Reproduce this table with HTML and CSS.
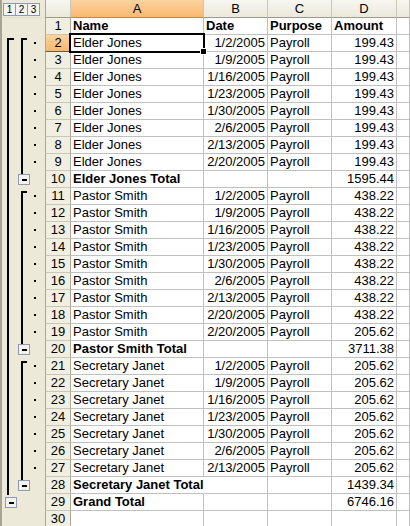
FILE: index.html
```html
<!DOCTYPE html>
<html>
<head>
<meta charset="utf-8">
<link rel="stylesheet" href="styles.css">
</head>
<body>
<div class="app">
  <div class="outline">
    <div class="levels"><span>1</span><span>2</span><span>3</span></div>
    <div class="br1"></div>
    <div class="btn lv1 r29"></div>
    <div class="br2 g1"></div>
    <div class="br2 g2"></div>
    <div class="br2 g3"></div>
    <div class="btn lv2 r10"></div>
    <div class="btn lv2 r20"></div>
    <div class="btn lv2 r28"></div>
    <div class="dots g1"></div>
    <div class="dots g2"></div>
    <div class="dots g3"></div>
  </div>
  <div class="sheet">
    <div class="ch corner"></div><div class="ch sel">A</div><div class="ch">B</div><div class="ch">C</div><div class="ch">D</div><div class="ch"></div>

    <div class="rh">1</div><div class="c b">Name</div><div class="c b">Date</div><div class="c b">Purpose</div><div class="c b">Amount</div><div class="c"></div>
    <div class="rh sel">2</div><div class="c active">Elder Jones</div><div class="c r">1/2/2005</div><div class="c">Payroll</div><div class="c r">199.43</div><div class="c"></div>
    <div class="rh">3</div><div class="c">Elder Jones</div><div class="c r">1/9/2005</div><div class="c">Payroll</div><div class="c r">199.43</div><div class="c"></div>
    <div class="rh">4</div><div class="c">Elder Jones</div><div class="c r">1/16/2005</div><div class="c">Payroll</div><div class="c r">199.43</div><div class="c"></div>
    <div class="rh">5</div><div class="c">Elder Jones</div><div class="c r">1/23/2005</div><div class="c">Payroll</div><div class="c r">199.43</div><div class="c"></div>
    <div class="rh">6</div><div class="c">Elder Jones</div><div class="c r">1/30/2005</div><div class="c">Payroll</div><div class="c r">199.43</div><div class="c"></div>
    <div class="rh">7</div><div class="c">Elder Jones</div><div class="c r">2/6/2005</div><div class="c">Payroll</div><div class="c r">199.43</div><div class="c"></div>
    <div class="rh">8</div><div class="c">Elder Jones</div><div class="c r">2/13/2005</div><div class="c">Payroll</div><div class="c r">199.43</div><div class="c"></div>
    <div class="rh">9</div><div class="c">Elder Jones</div><div class="c r">2/20/2005</div><div class="c">Payroll</div><div class="c r">199.43</div><div class="c"></div>
    <div class="rh">10</div><div class="c b">Elder Jones Total</div><div class="c"></div><div class="c"></div><div class="c r">1595.44</div><div class="c"></div>
    <div class="rh">11</div><div class="c">Pastor Smith</div><div class="c r">1/2/2005</div><div class="c">Payroll</div><div class="c r">438.22</div><div class="c"></div>
    <div class="rh">12</div><div class="c">Pastor Smith</div><div class="c r">1/9/2005</div><div class="c">Payroll</div><div class="c r">438.22</div><div class="c"></div>
    <div class="rh">13</div><div class="c">Pastor Smith</div><div class="c r">1/16/2005</div><div class="c">Payroll</div><div class="c r">438.22</div><div class="c"></div>
    <div class="rh">14</div><div class="c">Pastor Smith</div><div class="c r">1/23/2005</div><div class="c">Payroll</div><div class="c r">438.22</div><div class="c"></div>
    <div class="rh">15</div><div class="c">Pastor Smith</div><div class="c r">1/30/2005</div><div class="c">Payroll</div><div class="c r">438.22</div><div class="c"></div>
    <div class="rh">16</div><div class="c">Pastor Smith</div><div class="c r">2/6/2005</div><div class="c">Payroll</div><div class="c r">438.22</div><div class="c"></div>
    <div class="rh">17</div><div class="c">Pastor Smith</div><div class="c r">2/13/2005</div><div class="c">Payroll</div><div class="c r">438.22</div><div class="c"></div>
    <div class="rh">18</div><div class="c">Pastor Smith</div><div class="c r">2/20/2005</div><div class="c">Payroll</div><div class="c r">438.22</div><div class="c"></div>
    <div class="rh">19</div><div class="c">Pastor Smith</div><div class="c r">2/20/2005</div><div class="c">Payroll</div><div class="c r">205.62</div><div class="c"></div>
    <div class="rh">20</div><div class="c b">Pastor Smith Total</div><div class="c"></div><div class="c"></div><div class="c r">3711.38</div><div class="c"></div>
    <div class="rh">21</div><div class="c">Secretary Janet</div><div class="c r">1/2/2005</div><div class="c">Payroll</div><div class="c r">205.62</div><div class="c"></div>
    <div class="rh">22</div><div class="c">Secretary Janet</div><div class="c r">1/9/2005</div><div class="c">Payroll</div><div class="c r">205.62</div><div class="c"></div>
    <div class="rh">23</div><div class="c">Secretary Janet</div><div class="c r">1/16/2005</div><div class="c">Payroll</div><div class="c r">205.62</div><div class="c"></div>
    <div class="rh">24</div><div class="c">Secretary Janet</div><div class="c r">1/23/2005</div><div class="c">Payroll</div><div class="c r">205.62</div><div class="c"></div>
    <div class="rh">25</div><div class="c">Secretary Janet</div><div class="c r">1/30/2005</div><div class="c">Payroll</div><div class="c r">205.62</div><div class="c"></div>
    <div class="rh">26</div><div class="c">Secretary Janet</div><div class="c r">2/6/2005</div><div class="c">Payroll</div><div class="c r">205.62</div><div class="c"></div>
    <div class="rh">27</div><div class="c">Secretary Janet</div><div class="c r">2/13/2005</div><div class="c">Payroll</div><div class="c r">205.62</div><div class="c"></div>
    <div class="rh">28</div><div class="c b spill">Secretary Janet Total</div><div class="c"></div><div class="c"></div><div class="c r">1439.34</div><div class="c"></div>
    <div class="rh">29</div><div class="c b">Grand Total</div><div class="c"></div><div class="c"></div><div class="c r">6746.16</div><div class="c"></div>
    <div class="rh">30</div><div class="c"></div><div class="c"></div><div class="c"></div><div class="c"></div><div class="c"></div>
  </div>
</div>
</body>
</html>
```
FILE: styles.css
```css
html, body {
  margin: 0;
  padding: 0;
  background: #ffffff;
}
body {
  font-family: "Liberation Sans", Arial, sans-serif;
  font-size: 13px;
  color: #000;
}
.app {
  display: flex;
  width: 410px;
  height: 526px;
  overflow: hidden;
}

/* ---------- outline gutter ---------- */
.outline {
  flex: none;
  width: 45px;
  display: grid;
  grid-template-columns: 14px 14px 17px;
  grid-template-rows: 18px repeat(30, 17px);
  background: #ECE9D8;
  box-sizing: border-box;
  border-left: 2px solid #A7A395;
}
.levels {
  grid-column: 1 / 4;
  grid-row: 1;
  display: flex;
  padding: 3px 0 0 1px;
  border-bottom: 1px solid #E3E0D0;
}
.levels span {
  width: 11px;
  height: 11px;
  border: 1px solid #8C9AB7;
  margin-right: -1px;
  background: #F5F4EE;
  font-size: 10px;
  line-height: 11px;
  text-align: center;
}
.br1 {
  grid-column: 1;
  grid-row: 3 / 30;
  margin: 3px 0 -1px 5px;
  width: 7px;
  box-sizing: border-box;
  border-left: 2px solid #000;
  border-top: 2px solid #000;
}
.br2 {
  grid-column: 2;
  margin: 3px 0 -3px 5px;
  width: 6px;
  box-sizing: border-box;
  border-left: 2px solid #000;
  border-top: 2px solid #000;
}
.g1 { grid-row: 3 / 11; }
.g2 { grid-row: 12 / 21; }
.g3 { grid-row: 22 / 29; }
.dots {
  grid-column: 3;
  background-image: repeating-linear-gradient(to bottom, transparent 0 7px, #000 7px 9px, transparent 9px 17px);
  background-size: 2px 17px;
  background-repeat: repeat-y;
  background-position: 4px 0;
}
.btn {
  width: 12px;
  height: 11px;
  box-sizing: border-box;
  border: 1px solid #8C9AB7;
  background: #F3F2EC;
  align-self: center;
  position: relative;
}
.btn::after {
  content: "";
  position: absolute;
  left: 3px;
  top: 4px;
  width: 5px;
  height: 2px;
  background: #000;
}
.lv1 { grid-column: 1; margin-left: 3px; }
.lv2 { grid-column: 2; margin-left: 2px; }
.r10 { grid-row: 11; }
.r20 { grid-row: 21; }
.r28 { grid-row: 29; }
.r29 { grid-row: 30; }

/* ---------- sheet ---------- */
.sheet {
  flex: 1;
  display: grid;
  grid-template-columns: 26px 133px 64px 64px 65px 1fr;
  grid-template-rows: 18px repeat(30, 17px);
  line-height: 16px;
  white-space: nowrap;
}
.ch {
  background: linear-gradient(#F7F6F0, #EBE8DC);
  border-right: 1px solid #CBC7B8;
  border-bottom: 1px solid #9D9A8C;
  text-align: center;
  padding-top: 1px;
  line-height: 16px;
}
.ch.corner {
  border-left: 1px solid #ACA899;
}
.ch.sel {
  background: linear-gradient(#FBD3A0, #F8B870);
  border-bottom-color: #C5873C;
}
.rh {
  background: #F1EFE2;
  border-left: 1px solid #ACA899;
  border-right: 1px solid #ACA899;
  border-bottom: 1px solid #CBC7B8;
  text-align: center;
}
.rh.sel {
  background: linear-gradient(#FBD3A0, #F8B870);
  border-bottom-color: #6E5A3A;
}
.c {
  border-right: 1px solid #C0C0C0;
  border-bottom: 1px solid #C0C0C0;
  padding: 0 2px;
  overflow: visible;
}
.b { font-weight: bold; }
.r { text-align: right; }
.spill {
  position: relative;
  z-index: 1;
  border-right-color: transparent;
}
.active {
  position: relative;
  z-index: 2;
}
.active::after {
  content: "";
  position: absolute;
  left: -2px;
  top: -2px;
  right: -2px;
  bottom: -2px;
  border: 2px solid #000;
}
.active::before {
  content: "";
  position: absolute;
  right: -4px;
  bottom: -4px;
  width: 5px;
  height: 5px;
  background: #000;
  border: 1px solid #fff;
  z-index: 3;
}
```
